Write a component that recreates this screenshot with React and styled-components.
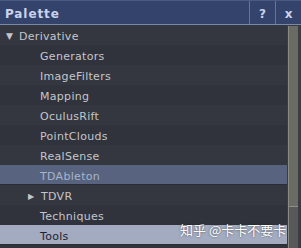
import styled, { createGlobalStyle } from "styled-components";

const Global = createGlobalStyle`
  html, body {
    margin: 0;
    padding: 0;
    background: #2b2d34;
  }
  body {
    font-family: "DejaVu Sans", "Noto Sans", sans-serif;
  }
`;

const Panel = styled.div`
  position: relative;
  width: 301px;
  height: 248px;
  overflow: hidden;
  background: #2d2f37;
  display: flex;
  flex-direction: column;
`;

const Header = styled.div`
  flex-shrink: 0;
  height: 25px;
  display: flex;
  align-items: stretch;
  background: #33436b;
  border-top: 1px solid #4a5a82;
  border-bottom: 1px solid #7a87a6;
  box-sizing: border-box;
`;

const Title = styled.div`
  flex: 1;
  display: flex;
  align-items: center;
  padding: 2px 0 0 5px;
  font-size: 12px;
  font-weight: bold;
  letter-spacing: 0.9px;
  color: #c9d3ec;
`;

const HeadBtn = styled.div`
  width: 25px;
  display: flex;
  align-items: center;
  justify-content: center;
  padding-top: 2px;
  border-left: 1px solid #6474a0;
  font-size: 12px;
  font-weight: bold;
  color: #c9d3ec;
`;

const Body = styled.div`
  flex: 1;
  min-height: 0;
  display: flex;
  overflow: hidden;
`;

const List = styled.div`
  flex: 1;
  display: flex;
  flex-direction: column;
`;

const Row = styled.div`
  flex-shrink: 0;
  height: 20px;
  display: flex;
  align-items: center;
  padding: 3px 0 0 ${(p) => p.$indent}px;
  font-size: 11px;
  letter-spacing: 0.3px;
  color: ${(p) => (p.$sel === "light" ? "#1f2230" : p.$sel === "blue" ? "#aab4cc" : "#c4c6cc")};
  background: ${(p) =>
    p.$sel === "light"
      ? "#a2abc0"
      : p.$sel === "blue"
      ? "#57637f"
      : p.$odd
      ? "#30333c"
      : "#34373f"};
  border-bottom: 1px solid ${(p) => (p.$sel ? "#2b2d34" : "transparent")};
  box-sizing: border-box;
`;

const Arrow = styled.span`
  width: 13px;
  display: inline-flex;
  align-items: center;
  color: #c4c6cc;
  font-size: ${(p) => (p.$open ? 9 : 8)}px;
`;

const Scroll = styled.div`
  width: 14px;
  display: flex;
  flex-direction: column;
  background: #3a3c44;
`;

const Track = styled.div`
  margin-top: 1px;
  width: 9px;
  margin-left: 1px;
  display: flex;
  flex-direction: column;
  flex: 1;
  border-left: 1px solid #8a8a84;
`;

const Thumb = styled.div`
  height: 180px;
  background: #6b6b66;
  border-bottom: 1px solid #8e8e88;
`;

const Rest = styled.div`
  flex: 1;
  background: #58585b;
`;

const Watermark = styled.div`
  position: absolute;
  left: 180px;
  top: 220px;
  font-family: "Noto Sans CJK SC", sans-serif;
  font-size: 13px;
  color: #ffffff;
  text-shadow: 0 0 2px rgba(0, 0, 0, 0.6);
  white-space: nowrap;
`;

const items = [
  { label: "Derivative", indent: 6, arrow: "▼", open: true },
  { label: "Generators", indent: 40 },
  { label: "ImageFilters", indent: 40 },
  { label: "Mapping", indent: 40 },
  { label: "OculusRift", indent: 40 },
  { label: "PointClouds", indent: 40 },
  { label: "RealSense", indent: 40 },
  { label: "TDAbleton", indent: 40, sel: "blue" },
  { label: "TDVR", indent: 28, arrow: "▶" },
  { label: "Techniques", indent: 40 },
  { label: "Tools", indent: 40, sel: "light" },
  { label: "", indent: 40 },
];

export default function App() {
  return (
    <>
      <Global />
      <Panel>
        <Header>
          <Title>Palette</Title>
          <HeadBtn>?</HeadBtn>
          <HeadBtn>x</HeadBtn>
        </Header>
        <Body>
          <List>
            {items.map((it, i) => (
              <Row key={i} $indent={it.indent} $sel={it.sel} $odd={i % 2 === 1}>
                {it.arrow && <Arrow $open={it.open}>{it.arrow}</Arrow>}
                {it.label}
              </Row>
            ))}
          </List>
          <Scroll>
            <Track>
              <Thumb />
              <Rest />
            </Track>
          </Scroll>
        </Body>
        <Watermark>知乎 @卡卡不要卡</Watermark>
      </Panel>
    </>
  );
}
